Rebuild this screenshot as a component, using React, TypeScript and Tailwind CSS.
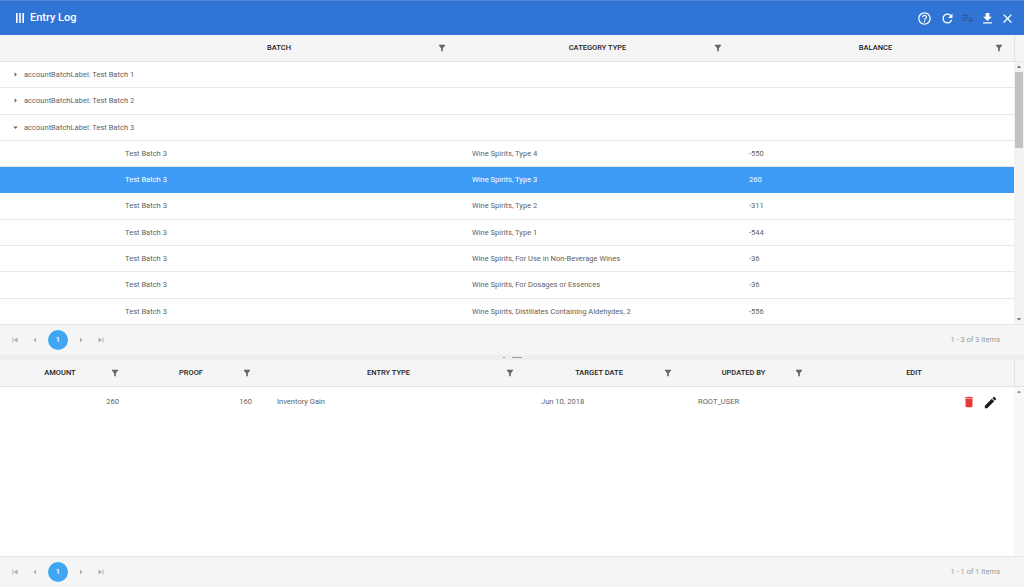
import {
    MdHelpOutline,
    MdRefresh,
    MdPlaylistAdd,
    MdFileDownload,
    MdClose,
    MdFilterAlt,
    MdDelete,
    MdEdit,
    MdSkipPrevious,
    MdSkipNext,
    MdArrowLeft,
    MdArrowRight,
    MdArrowDropUp,
    MdArrowDropDown,
} from "react-icons/md";

const topCols = "grid grid-cols-[457px_276px_281px]";
const bottomCols = "grid grid-cols-[130px_132px_263px_158px_131px_200px]";

const batchRows = [
    ["Wine Spirits, Type 4", "-550"],
    ["Wine Spirits, Type 3", "260"],
    ["Wine Spirits, Type 2", "-311"],
    ["Wine Spirits, Type 1", "-544"],
    ["Wine Spirits, For Use in Non-Beverage Wines", "-36"],
    ["Wine Spirits, For Dosages or Essences", "-36"],
    ["Wine Spirits, Distillates Containing Aldehydes, 2", "-556"],
];

function HeaderCell({ label, pad }: { label: string; pad?: string }) {
    return (
        <div className="flex items-center pr-[10px]">
            <span className={`flex-1 text-center text-[7.5px] font-medium text-[#222] ${pad || ""}`}>{label}</span>
            <MdFilterAlt size={10} className="-ml-[10px] text-[#666]" />
        </div>
    );
}

function Pager({ info }: { info: string }) {
    return (
        <div className="flex h-[31px] items-center border-t border-[#e4e4e4] bg-[#f5f5f5] pl-[10px] pr-[24px] text-[#aaa]">
            <MdSkipPrevious size={10} />
            <MdArrowLeft size={12} className="ml-[9px]" />
            <span className="ml-[7px] flex h-[20px] w-[20px] items-center justify-center rounded-full bg-[#3fa6f5] text-[7.5px] font-medium text-white">1</span>
            <MdArrowRight size={12} className="ml-[7px]" />
            <MdSkipNext size={10} className="ml-[9px]" />
            <span className="ml-auto text-[7.5px] text-[#9a9a9a]">{info}</span>
        </div>
    );
}

export default function App() {
    return (
        <div className="flex h-[587px] w-[1024px] flex-col overflow-hidden bg-white font-['Roboto',sans-serif]">
            {/* Title bar */}
            <header className="flex h-[35px] shrink-0 items-center border-t border-[#4d86dc] bg-[#3074d6] pl-[16px] pr-[9px] text-white shadow-[0_1px_2px_rgba(0,0,0,0.25)]">
                <svg width="8" height="10" viewBox="0 0 8 10" fill="currentColor">
                    <rect x="0" y="0" width="1.6" height="10" />
                    <rect x="3.2" y="0" width="1.6" height="10" />
                    <rect x="6.4" y="0" width="1.6" height="10" />
                </svg>
                <span className="ml-[6px] text-[11px] font-medium">Entry Log</span>
                <div className="ml-auto flex items-center">
                    <MdHelpOutline size={15} />
                    <MdRefresh size={15} className="ml-[8px]" />
                    <MdPlaylistAdd size={15} className="ml-[5px] text-[#2a5aa0]" />
                    <MdFileDownload size={15} className="ml-[5px]" />
                    <MdClose size={15} className="ml-[5px]" />
                </div>
            </header>

            {/* Batches grid */}
            <div className="flex h-[289px] shrink-0">
                <div className="w-[1014px] shrink-0">
                    <div className={`${topCols} h-[27px] border-b border-[#e4e4e4] bg-[#f5f5f5]`}>
                        <HeaderCell label="BATCH" pad="pl-[111px]" />
                        <HeaderCell label="CATEGORY TYPE" pad="pl-[15px]" />
                        <HeaderCell label="BALANCE" pad="pl-[14px]" />
                    </div>
                    {["1", "2"].map((n) => (
                        <div key={n} className="flex h-[26.3px] items-center border-b border-[#e8e8e8] text-[7.55px] text-[#5f5f5f]">
                            <MdArrowRight size={11} className="ml-[10px] text-[#666]" />
                            <span className="ml-[3px]">accountBatchLabel: Test Batch {n}</span>
                        </div>
                    ))}
                    <div className="flex h-[26.3px] items-center border-b border-[#e8e8e8] text-[7.55px] text-[#5f5f5f]">
                        <MdArrowDropDown size={11} className="ml-[10px] text-[#666]" />
                        <span className="ml-[3px]">accountBatchLabel: Test Batch 3</span>
                    </div>
                    {batchRows.map((row, i) => (
                        <div
                            key={row[0]}
                            className={`${topCols} h-[26.3px] items-center border-b text-[7.55px] ${i === 1 ? "border-[#3d9af5] bg-[#3d9af5] text-white" : "border-[#e8e8e8] text-[#5f5f5f]"}`}
                        >
                            <span className="pl-[125px]">Test Batch 3</span>
                            <span className="pl-[15px]">{row[0]}</span>
                            <span className="pl-[16px]">{row[1]}</span>
                        </div>
                    ))}
                </div>
                <div className="flex w-[10px] shrink-0 flex-col items-center bg-[#f3f3f3] text-[#555]">
                    <div className="h-[27px] w-full shrink-0 border-l border-b border-[#e4e4e4] bg-[#f5f5f5]" />
                    <MdArrowDropUp size={10} className="shrink-0" />
                    <div className="h-[76px] w-[8px] shrink-0 bg-[#c1c1c1]" />
                    <MdArrowDropDown size={10} className="mt-auto shrink-0" />
                </div>
            </div>
            <Pager info="1 - 3 of 3 items" />

            {/* Splitter */}
            <div className="flex h-[5px] shrink-0 items-center justify-center gap-[7px] bg-[#eeeeee]">
                <span className="h-px w-[2px] bg-[#999]" />
                <span className="h-px w-[10px] bg-[#999]" />
            </div>

            {/* Entries grid */}
            <div className="flex min-h-0 flex-1">
                <div className="w-[1014px] shrink-0">
                    <div className={`${bottomCols} h-[27px] border-b border-[#e4e4e4] bg-[#f5f5f5]`}>
                        <HeaderCell label="AMOUNT" />
                        <HeaderCell label="PROOF" />
                        <HeaderCell label="ENTRY TYPE" />
                        <HeaderCell label="TARGET DATE" />
                        <HeaderCell label="UPDATED BY" />
                        <div className="flex items-center justify-center text-[7.5px] font-medium text-[#222]">EDIT</div>
                    </div>
                    <div className={`${bottomCols} h-[30px] items-center text-[7.55px] text-[#5f5f5f]`}>
                        <span className="pr-[11px] text-right">260</span>
                        <span className="pr-[10px] text-right">160</span>
                        <span className="pl-[15px]">Inventory Gain</span>
                        <span className="pl-[16px]">Jun 10, 2018</span>
                        <span className="pl-[15px]">ROOT_USER</span>
                        <span className="flex items-center justify-end gap-[7px] pr-[16px]">
                            <MdDelete size={14} className="text-[#e53935]" />
                            <MdEdit size={15} className="text-[#1a1a1a]" />
                        </span>
                    </div>
                </div>
                <div className="flex w-[10px] shrink-0 flex-col items-center bg-[#f8f8f8] text-[#777]">
                    <div className="h-[27px] w-full shrink-0 border-l border-b border-[#e4e4e4] bg-[#f5f5f5]" />
                    <MdArrowDropUp size={10} className="shrink-0" />
                </div>
            </div>
            <Pager info="1 - 1 of 1 items" />
        </div>
    );
}
